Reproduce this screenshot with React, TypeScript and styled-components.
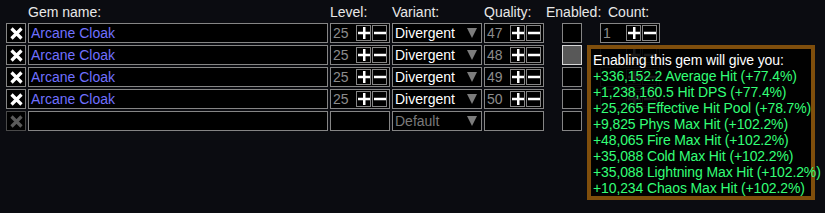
import styled, { createGlobalStyle } from 'styled-components';

const GlobalStyle = createGlobalStyle`
  html, body {
    margin: 0;
    padding: 0;
    background: #0b0c11;
  }
  body {
    font-family: 'Liberation Sans', Arial, sans-serif;
    font-size: 14px;
    color: #ffffff;
  }
`;

type Gem = {
  name: string;
  level?: number;
  variant: string;
  quality?: number;
  enabled: 'off' | 'hover' | 'empty';
  count?: number;
  hidden?: boolean;
};

const gems: Gem[] = [
  { name: 'Arcane Cloak', level: 25, variant: 'Divergent', quality: 47, enabled: 'off', count: 1 },
  { name: 'Arcane Cloak', level: 25, variant: 'Divergent', quality: 48, enabled: 'hover', count: 1, hidden: true },
  { name: 'Arcane Cloak', level: 25, variant: 'Divergent', quality: 49, enabled: 'off', count: 1, hidden: true },
  { name: 'Arcane Cloak', level: 25, variant: 'Divergent', quality: 50, enabled: 'off', count: 1, hidden: true },
  { name: '', variant: 'Default', enabled: 'empty' },
];

const gains = [
  '+336,152.2 Average Hit (+77.4%)',
  '+1,238,160.5 Hit DPS (+77.4%)',
  '+25,265 Effective Hit Pool (+78.7%)',
  '+9,825 Phys Max Hit (+102.2%)',
  '+48,065 Fire Max Hit (+102.2%)',
  '+35,088 Cold Max Hit (+102.2%)',
  '+35,088 Lightning Max Hit (+102.2%)',
  '+10,234 Chaos Max Hit (+102.2%)',
];

const PlusIcon = () => (
  <svg width="12" height="12" viewBox="0 0 12 12">
    <rect x="5" y="0" width="2.5" height="12" fill="#fff" />
    <rect x="0" y="4.75" width="12" height="2.5" fill="#fff" />
  </svg>
);

const MinusIcon = () => (
  <svg width="12" height="12" viewBox="0 0 12 12">
    <rect x="0" y="4.75" width="12" height="2.5" fill="#fff" />
  </svg>
);

const CrossIcon = ({ dim }: { dim?: boolean }) => (
  <svg width="13" height="13" viewBox="0 0 13 13">
    <path d="M1.5 1.5 L11.5 11.5 M11.5 1.5 L1.5 11.5" stroke={dim ? '#5a5a5a' : '#fff'} strokeWidth="3.2" />
  </svg>
);

const Stepper = () => (
  <Steps>
    <StepButton><PlusIcon /></StepButton>
    <StepButton><MinusIcon /></StepButton>
  </Steps>
);

const App = () => {
  return (
    <>
      <GlobalStyle />
      <Page>
        <Grid>
          <span />
          <Label>Gem name:</Label>
          <Label>Level:</Label>
          <Label>Variant:</Label>
          <Label>Quality:</Label>
          <Label>Enabled:</Label>
          <Label $indent={24}>Count:</Label>

          {gems.map((gem, i) => (
            <Row key={i}>
              <RemoveButton $dim={!gem.name}>
                <CrossIcon dim={!gem.name} />
              </RemoveButton>
              <NameBox>{gem.name}</NameBox>
              <NumberBox>
                {gem.level !== undefined && (
                  <>
                    <NumberText>{gem.level}</NumberText>
                    <Stepper />
                  </>
                )}
              </NumberBox>
              <Select $muted={!gem.name}>
                <span>{gem.variant}</span>
                <Arrow />
              </Select>
              <NumberBox>
                {gem.quality !== undefined && (
                  <>
                    <NumberText>{gem.quality}</NumberText>
                    <Stepper />
                  </>
                )}
              </NumberBox>
              <Check $state={gem.enabled} />
              {gem.count !== undefined ? (
                <CountBox>
                  <NumberText>{gem.hidden ? '' : gem.count}</NumberText>
                  <Stepper />
                </CountBox>
              ) : (
                <span />
              )}
            </Row>
          ))}
        </Grid>

        <Tooltip>
          <TipTitle>Enabling this gem will give you:</TipTitle>
          {gains.map((line) => (
            <TipLine key={line}>{line}</TipLine>
          ))}
        </Tooltip>
      </Page>
    </>
  );
};

export default App;

const Page = styled.div`
  position: relative;
  width: 825px;
  height: 213px;
  padding: 4px 6px;
  box-sizing: border-box;
`;

const Grid = styled.div`
  display: grid;
  grid-template-columns: 20px 300px 60px 90px 60px 36px 76px;
  grid-auto-rows: 20px;
  grid-template-rows: 17px;
  column-gap: 2px;
  row-gap: 2px;
`;

const Row = styled.div`
  display: contents;
`;

const Label = styled.span<{ $indent?: number }>`
  padding-left: ${(p) => p.$indent ?? 0}px;
  line-height: 17px;
  white-space: nowrap;
  color: #e8e8e8;
`;

const Box = styled.div`
  box-sizing: border-box;
  height: 20px;
  border: 1px solid #858585;
  background: #000;
  display: flex;
  align-items: center;
`;

const RemoveButton = styled(Box)<{ $dim?: boolean }>`
  justify-content: center;
  border-color: ${(p) => (p.$dim ? '#4a4a4a' : '#858585')};
`;

const NameBox = styled(Box)`
  padding-left: 2px;
  color: #7070ff;
  white-space: nowrap;
`;

const NumberBox = styled(Box)`
  padding: 0 2px 0 2px;
  justify-content: space-between;
`;

const CountBox = styled(NumberBox)`
  justify-self: end;
  width: 60px;
`;

const NumberText = styled.span`
  color: #8c8c8c;
`;

const Steps = styled.div`
  display: flex;
  gap: 1px;
`;

const StepButton = styled.div`
  box-sizing: border-box;
  width: 15px;
  height: 16px;
  border: 1px solid #858585;
  display: flex;
  align-items: center;
  justify-content: center;
`;

const Select = styled(Box)<{ $muted?: boolean }>`
  padding: 0 4px 0 2px;
  justify-content: space-between;
  color: ${(p) => (p.$muted ? '#7a7a7a' : '#ffffff')};
`;

const Arrow = styled.span`
  width: 0;
  height: 0;
  border-left: 5px solid transparent;
  border-right: 5px solid transparent;
  border-top: 10px solid #7c7c7c;
`;

const Check = styled(Box)<{ $state: 'off' | 'hover' | 'empty' }>`
  justify-self: end;
  width: 20px;
  background: ${(p) => (p.$state === 'hover' ? '#585858' : '#000')};
  border-color: ${(p) => (p.$state === 'hover' ? '#d8d8d8' : '#858585')};
`;

const Tooltip = styled.div`
  position: absolute;
  left: 587px;
  top: 45px;
  width: 228px;
  height: 155px;
  box-sizing: border-box;
  border: 4px solid #7f4e0c;
  background: rgba(0, 0, 0, 0.9);
  padding: 3px 2px;
  letter-spacing: -0.12px;
`;

const TipTitle = styled.div`
  line-height: 16px;
  color: #ffffff;
  white-space: nowrap;
`;

const TipLine = styled.div`
  line-height: 16px;
  color: #33ff77;
  white-space: nowrap;
`;
